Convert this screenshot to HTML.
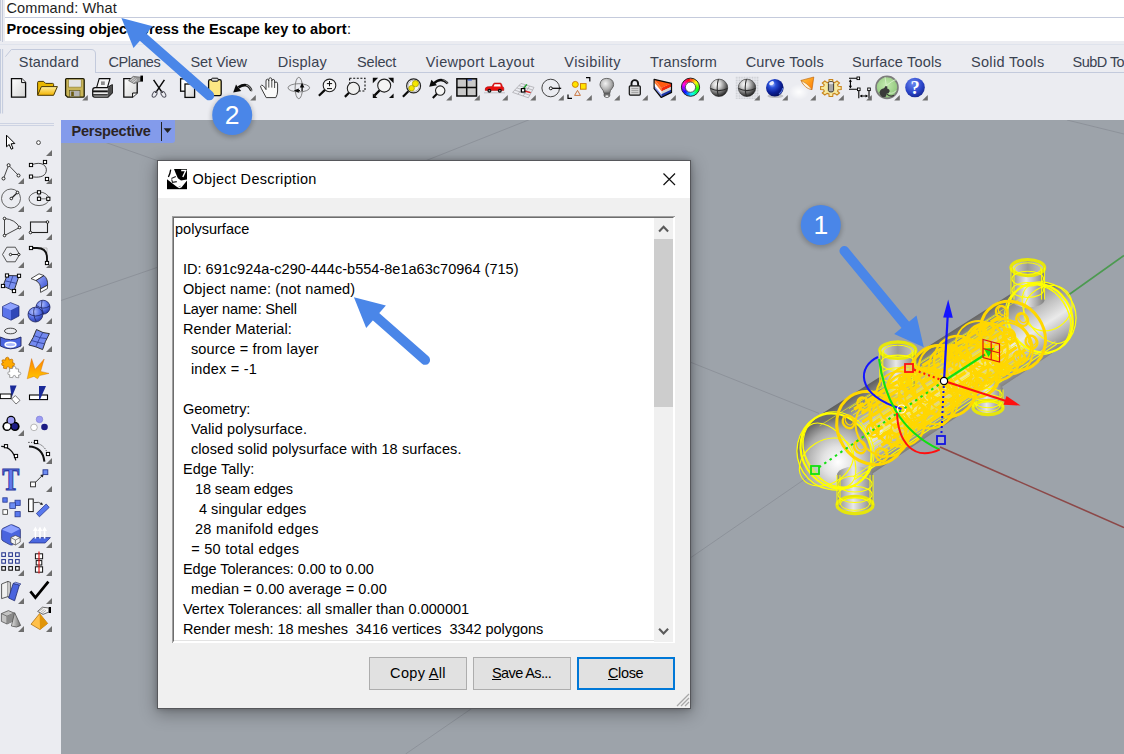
<!DOCTYPE html>
<html><head><meta charset="utf-8"><title>Object Description</title>
<style>
html,body{margin:0;padding:0}
body{width:1124px;height:754px;overflow:hidden;position:relative;background:#ebecf1;font-family:"Liberation Sans",sans-serif;}
.t{position:absolute;white-space:pre;}
.a{position:absolute;}
svg{position:absolute;left:0;top:0;overflow:visible}
</style></head>
<body>
<div class="a" style="left:60px;top:119px;width:1064px;height:635px;background:#d3d8e6"></div><div class="a" style="left:61px;top:120px;width:1063px;height:634px;background:#9da3aa"></div>
<svg width="1124" height="754" viewBox="0 0 1124 754"><path d="M103 141.5 L160 161.5 M61 300.5 L157 267.5 M690 362 L819 413.4 M405.6 754 L810 475.5 M529 119.8 L425 161 M1067 120 L1124 134 " stroke="#8d929a" stroke-width="1" fill="none"/><line x1="940" y1="447" x2="1124" y2="527.5" stroke="#8c4848" stroke-width="1.6"/><line x1="1060" y1="301" x2="1124" y2="255.5" stroke="#4c9a50" stroke-width="1.6"/><defs><linearGradient id="cyl" gradientUnits="userSpaceOnUse" x1="914.7" y1="352.0" x2="958.4" y2="419.0"><stop offset="0" stop-color="#585858"/><stop offset="0.14" stop-color="#848484"/><stop offset="0.4" stop-color="#c2c2c2"/><stop offset="0.6" stop-color="#eaeaea"/><stop offset="0.8" stop-color="#b4b4b4"/><stop offset="1" stop-color="#767676"/></linearGradient><radialGradient id="capL" gradientUnits="userSpaceOnUse" cx="838" cy="462" r="44"><stop offset="0" stop-color="#ffffff"/><stop offset="0.35" stop-color="#e2e2e2"/><stop offset="0.75" stop-color="#a9a9a9"/><stop offset="1" stop-color="#6c6c6c"/></radialGradient><linearGradient id="noz" x1="0" x2="1" y1="0" y2="0"><stop offset="0" stop-color="#8a8a8a"/><stop offset="0.45" stop-color="#e8e8e8"/><stop offset="1" stop-color="#808080"/></linearGradient><linearGradient id="nozin" x1="0" x2="1" y1="0" y2="0"><stop offset="0" stop-color="#d8d8d8"/><stop offset="0.5" stop-color="#9a9a9a"/><stop offset="1" stop-color="#c8c8c8"/></linearGradient></defs><path d="M814.7 418.3 L1020.3 287.8 A36.0 36.0 0 0 1 1059.7 348.2 L857.3 483.7 A39.0 39.0 0 0 1 814.7 418.3 Z" fill="url(#cyl)"/><path d="M814.7 418.3 A39.0 39.0 0 0 0 857.3 483.7 A33.9 39.0 -33.1 0 0 814.7 418.3 Z" fill="url(#capL)"/><path d="M1020.3 287.8 A36.0 36.0 0 0 1 1059.7 348.2 A31.3 36.0 -33.1 0 0 1020.3 287.8 Z" fill="#000" opacity="0.18"/><path d="M879.8 350.2 L879.8 386.2 A18 8.2 0 0 0 915.8 386.2 L915.8 350.2 Z" fill="url(#noz)" stroke="none"/><ellipse cx="897.8" cy="350.2" rx="18" ry="8.2" fill="url(#nozin)" stroke="#e6e60c" stroke-width="3.3"/><ellipse cx="897.8" cy="351.2" rx="14.5" ry="5.999999999999999" fill="none" stroke="#ffff00" stroke-width="1"/><ellipse cx="897.8" cy="362.8" rx="17" ry="7.699999999999999" fill="none" stroke="#ffff00" stroke-width="1.1"/><ellipse cx="897.8" cy="375.4" rx="17" ry="7.699999999999999" fill="none" stroke="#ffff00" stroke-width="1.1"/><line x1="879.8" y1="350.2" x2="879.8" y2="386.2" stroke="#ffff00" stroke-width="1"/><line x1="882.8" y1="350.2" x2="882.8" y2="386.2" stroke="#ffff00" stroke-width="1"/><line x1="912.8" y1="350.2" x2="912.8" y2="386.2" stroke="#ffff00" stroke-width="1"/><line x1="915.8" y1="350.2" x2="915.8" y2="386.2" stroke="#ffff00" stroke-width="1"/><path d="M1011.0 267.6 L1011.0 299.6 A16.8 8 0 0 0 1044.6 299.6 L1044.6 267.6 Z" fill="url(#noz)" stroke="none"/><ellipse cx="1027.8" cy="267.6" rx="16.8" ry="8" fill="url(#nozin)" stroke="#e6e60c" stroke-width="3.3"/><ellipse cx="1027.8" cy="268.6" rx="13.3" ry="5.8" fill="none" stroke="#ffff00" stroke-width="1"/><ellipse cx="1027.8" cy="278.8" rx="15.8" ry="7.5" fill="none" stroke="#ffff00" stroke-width="1.1"/><ellipse cx="1027.8" cy="290.0" rx="15.8" ry="7.5" fill="none" stroke="#ffff00" stroke-width="1.1"/><line x1="1011.0" y1="267.6" x2="1011.0" y2="299.6" stroke="#ffff00" stroke-width="1"/><line x1="1014.0" y1="267.6" x2="1014.0" y2="299.6" stroke="#ffff00" stroke-width="1"/><line x1="1041.6" y1="267.6" x2="1041.6" y2="299.6" stroke="#ffff00" stroke-width="1"/><line x1="1044.6" y1="267.6" x2="1044.6" y2="299.6" stroke="#ffff00" stroke-width="1"/><path d="M837.0 505.0 L837.0 475.0 A18 8.5 0 0 1 873.0 475.0 L873.0 505.0 Z" fill="url(#noz)" stroke="none"/><ellipse cx="855" cy="505" rx="18" ry="8.5" fill="url(#noz)" stroke="#e6e60c" stroke-width="3.3"/><ellipse cx="855" cy="504" rx="14.5" ry="6.3" fill="none" stroke="#ffff00" stroke-width="1"/><ellipse cx="855" cy="494.5" rx="17" ry="8.0" fill="none" stroke="#ffff00" stroke-width="1.1"/><ellipse cx="855" cy="484.0" rx="17" ry="8.0" fill="none" stroke="#ffff00" stroke-width="1.1"/><line x1="837.0" y1="505.0" x2="837.0" y2="475.0" stroke="#ffff00" stroke-width="1"/><line x1="840.0" y1="505.0" x2="840.0" y2="475.0" stroke="#ffff00" stroke-width="1"/><line x1="870.0" y1="505.0" x2="870.0" y2="475.0" stroke="#ffff00" stroke-width="1"/><line x1="873.0" y1="505.0" x2="873.0" y2="475.0" stroke="#ffff00" stroke-width="1"/><path d="M973.0 407.5 L973.0 389.5 A15 7 0 0 1 1003.0 389.5 L1003.0 407.5 Z" fill="url(#noz)" stroke="none"/><ellipse cx="988" cy="407.5" rx="15" ry="7" fill="url(#noz)" stroke="#e6e60c" stroke-width="3.3"/><ellipse cx="988" cy="406.5" rx="11.5" ry="4.8" fill="none" stroke="#ffff00" stroke-width="1"/><ellipse cx="988" cy="401.2" rx="14" ry="6.5" fill="none" stroke="#ffff00" stroke-width="1.1"/><ellipse cx="988" cy="394.9" rx="14" ry="6.5" fill="none" stroke="#ffff00" stroke-width="1.1"/><line x1="973.0" y1="407.5" x2="973.0" y2="389.5" stroke="#ffff00" stroke-width="1"/><line x1="976.0" y1="407.5" x2="976.0" y2="389.5" stroke="#ffff00" stroke-width="1"/><line x1="1000.0" y1="407.5" x2="1000.0" y2="389.5" stroke="#ffff00" stroke-width="1"/><line x1="1003.0" y1="407.5" x2="1003.0" y2="389.5" stroke="#ffff00" stroke-width="1"/><line x1="854.6" y1="479.5" x2="1056.9" y2="344.0" stroke="#ffff00" stroke-width="1.1" /><line x1="852.9" y1="477.0" x2="1055.3" y2="341.5" stroke="#ffff00" stroke-width="0.9" /><line x1="819.6" y1="425.9" x2="1025.3" y2="295.4" stroke="#ffff00" stroke-width="0.8" opacity="0.7"/><path d="M814.7 418.3 A39.0 39.0 0 0 0 857.3 483.7" fill="none" stroke="#ffff00" stroke-width="1.3"/><path d="M1020.3 287.8 A36.0 36.0 0 0 1 1059.7 348.2" fill="none" stroke="#ffff00" stroke-width="1.3"/><ellipse cx="836.0" cy="451.0" rx="33.9" ry="39.0" transform="rotate(-33.10 836.0 451.0)" fill="none" stroke="#ffff00" stroke-width="2.2" /><ellipse cx="838.5" cy="449.4" rx="33.9" ry="39.0" transform="rotate(-33.10 838.5 449.4)" fill="none" stroke="#ffff00" stroke-width="1" /><ellipse cx="1040.0" cy="318.0" rx="31.3" ry="36.0" transform="rotate(-33.10 1040.0 318.0)" fill="none" stroke="#ffff00" stroke-width="2.2" /><ellipse cx="1037.5" cy="319.6" rx="31.4" ry="36.0" transform="rotate(-33.10 1037.5 319.6)" fill="none" stroke="#ffff00" stroke-width="1" /><ellipse cx="829.3" cy="455.4" rx="21.5" ry="35.9" transform="rotate(-33.10 829.3 455.4)" fill="none" stroke="#ffff00" stroke-width="1.1" /><ellipse cx="826.5" cy="462.0" rx="29.2" ry="21.5" transform="rotate(-33.10 826.5 462.0)" fill="none" stroke="#ffff00" stroke-width="1.1" /><ellipse cx="1046.7" cy="313.6" rx="19.8" ry="33.1" transform="rotate(-33.10 1046.7 313.6)" fill="none" stroke="#ffff00" stroke-width="1.1" /><ellipse cx="1047.9" cy="308.1" rx="25.2" ry="21.6" transform="rotate(-33.10 1047.9 308.1)" fill="none" stroke="#ffff00" stroke-width="1.1" /><path d="M871.5 399.2 L988.2 325.5 L1009.7 340.2 L1014.9 366.6 L900.4 443.6 L877.3 426.5 Z" fill="#ffd800" opacity="0.36"/><line x1="848.9" y1="408.6" x2="1000.8" y2="312.0" stroke="#ffff00" stroke-width="0.9" opacity="0.9"/><line x1="851.0" y1="411.7" x2="1002.8" y2="315.0" stroke="#ffff00" stroke-width="0.9" opacity="0.9"/><line x1="853.1" y1="414.9" x2="1004.7" y2="317.9" stroke="#ffff00" stroke-width="0.9" opacity="0.9"/><line x1="855.1" y1="418.1" x2="1006.6" y2="320.9" stroke="#ffff00" stroke-width="0.9" opacity="0.9"/><line x1="857.2" y1="421.3" x2="1008.5" y2="323.8" stroke="#ffff00" stroke-width="0.9" opacity="0.9"/><line x1="859.3" y1="424.5" x2="1010.5" y2="326.8" stroke="#ffff00" stroke-width="0.9" opacity="0.9"/><line x1="861.4" y1="427.7" x2="1012.4" y2="329.7" stroke="#ffff00" stroke-width="0.9" opacity="0.9"/><line x1="863.4" y1="430.8" x2="1014.3" y2="332.7" stroke="#ffff00" stroke-width="0.9" opacity="0.9"/><line x1="865.5" y1="434.0" x2="1016.2" y2="335.6" stroke="#ffff00" stroke-width="0.9" opacity="0.9"/><line x1="867.6" y1="437.2" x2="1018.1" y2="338.5" stroke="#ffff00" stroke-width="0.9" opacity="0.9"/><line x1="869.7" y1="440.4" x2="1020.1" y2="341.5" stroke="#ffff00" stroke-width="0.9" opacity="0.9"/><line x1="871.7" y1="443.6" x2="1022.0" y2="344.4" stroke="#ffff00" stroke-width="0.9" opacity="0.9"/><line x1="873.8" y1="446.8" x2="1023.9" y2="347.4" stroke="#ffff00" stroke-width="0.9" opacity="0.9"/><line x1="875.9" y1="449.9" x2="1025.8" y2="350.3" stroke="#ffff00" stroke-width="0.9" opacity="0.9"/><line x1="878.0" y1="453.1" x2="1027.8" y2="353.3" stroke="#ffff00" stroke-width="0.9" opacity="0.9"/><line x1="880.0" y1="456.3" x2="1029.7" y2="356.2" stroke="#ffff00" stroke-width="0.9" opacity="0.9"/><line x1="854.2" y1="409.3" x2="1002.6" y2="314.6" stroke="#ffd700" stroke-width="3.4" stroke-dasharray="11 2.5" stroke-dashoffset="0"/><line x1="861.6" y1="413.4" x2="1003.9" y2="322.1" stroke="#ffd700" stroke-width="3.4" stroke-dasharray="14 2.5" stroke-dashoffset="4"/><line x1="862.4" y1="421.9" x2="1005.2" y2="329.6" stroke="#ffd700" stroke-width="3.4" stroke-dasharray="17 2.5" stroke-dashoffset="8"/><line x1="869.8" y1="426.0" x2="1014.0" y2="332.2" stroke="#ffd700" stroke-width="3.4" stroke-dasharray="11 2.5" stroke-dashoffset="12"/><line x1="870.6" y1="434.4" x2="1015.3" y2="339.7" stroke="#ffd700" stroke-width="3.4" stroke-dasharray="14 2.5" stroke-dashoffset="16"/><line x1="878.0" y1="438.5" x2="1016.6" y2="347.1" stroke="#ffd700" stroke-width="3.4" stroke-dasharray="17 2.5" stroke-dashoffset="20"/><line x1="878.8" y1="447.0" x2="1025.4" y2="349.7" stroke="#ffd700" stroke-width="3.4" stroke-dasharray="11 2.5" stroke-dashoffset="24"/><line x1="885.9" y1="450.7" x2="1026.5" y2="356.8" stroke="#ffd700" stroke-width="3.4" stroke-dasharray="14 2.5" stroke-dashoffset="28"/><ellipse cx="882.8" cy="427.6" rx="26.0" ry="29.9" transform="rotate(-33.10 882.8 427.6)" fill="none" stroke="#ffd700" stroke-width="2.0" /><ellipse cx="892.9" cy="421.1" rx="20.6" ry="23.7" transform="rotate(-33.10 892.9 421.1)" fill="none" stroke="#ffd700" stroke-width="2.0" /><ellipse cx="903.1" cy="400.1" rx="25.8" ry="29.6" transform="rotate(-33.10 903.1 400.1)" fill="none" stroke="#ffd700" stroke-width="2.0" /><ellipse cx="908.1" cy="396.8" rx="20.4" ry="23.5" transform="rotate(-33.10 908.1 396.8)" fill="none" stroke="#ffd700" stroke-width="2.0" /><ellipse cx="931.4" cy="396.0" rx="25.5" ry="29.4" transform="rotate(-33.10 931.4 396.0)" fill="none" stroke="#ffd700" stroke-width="2.0" /><ellipse cx="936.4" cy="392.7" rx="20.3" ry="23.3" transform="rotate(-33.10 936.4 392.7)" fill="none" stroke="#ffd700" stroke-width="2.0" /><ellipse cx="945.0" cy="372.8" rx="25.3" ry="29.1" transform="rotate(-33.10 945.0 372.8)" fill="none" stroke="#ffd700" stroke-width="2.0" /><ellipse cx="950.0" cy="369.5" rx="20.1" ry="23.1" transform="rotate(-33.10 950.0 369.5)" fill="none" stroke="#ffd700" stroke-width="2.0" /><ellipse cx="971.6" cy="369.7" rx="25.1" ry="28.9" transform="rotate(-33.10 971.6 369.7)" fill="none" stroke="#ffd700" stroke-width="2.0" /><ellipse cx="975.0" cy="367.6" rx="20.0" ry="22.9" transform="rotate(-33.10 975.0 367.6)" fill="none" stroke="#ffd700" stroke-width="2.0" /><ellipse cx="981.8" cy="348.8" rx="25.0" ry="28.7" transform="rotate(-33.10 981.8 348.8)" fill="none" stroke="#ffd700" stroke-width="2.0" /><ellipse cx="986.9" cy="345.5" rx="19.8" ry="22.8" transform="rotate(-33.10 986.9 345.5)" fill="none" stroke="#ffd700" stroke-width="2.0" /><ellipse cx="1006.8" cy="346.8" rx="24.8" ry="28.5" transform="rotate(-33.10 1006.8 346.8)" fill="none" stroke="#ffd700" stroke-width="2.0" /><ellipse cx="1010.2" cy="344.6" rx="19.7" ry="22.6" transform="rotate(-33.10 1010.2 344.6)" fill="none" stroke="#ffd700" stroke-width="2.0" /><ellipse cx="871.2" cy="428.1" rx="33.0" ry="37.9" transform="rotate(-33.10 871.2 428.1)" fill="none" stroke="#ffd700" stroke-width="3.0" /><ellipse cx="943.2" cy="381.1" rx="32.1" ry="36.9" transform="rotate(-33.10 943.2 381.1)" fill="none" stroke="#ffd700" stroke-width="3.0" /><ellipse cx="1012.8" cy="335.8" rx="31.2" ry="35.9" transform="rotate(-33.10 1012.8 335.8)" fill="none" stroke="#ffd700" stroke-width="3.0" /><ellipse cx="897.4" cy="417.0" rx="26.5" ry="30.5" transform="rotate(-33.10 897.4 417.0)" fill="none" stroke="#ffd700" stroke-width="2.4" /><ellipse cx="914.2" cy="395.2" rx="26.3" ry="30.3" transform="rotate(-33.10 914.2 395.2)" fill="none" stroke="#ffd700" stroke-width="2.4" /><ellipse cx="926.4" cy="399.2" rx="26.3" ry="30.2" transform="rotate(-33.10 926.4 399.2)" fill="none" stroke="#ffd700" stroke-width="2.4" /><ellipse cx="961.1" cy="364.6" rx="25.8" ry="29.7" transform="rotate(-33.10 961.1 364.6)" fill="none" stroke="#ffd700" stroke-width="2.4" /><ellipse cx="973.3" cy="368.6" rx="25.8" ry="29.6" transform="rotate(-33.10 973.3 368.6)" fill="none" stroke="#ffd700" stroke-width="2.4" /><ellipse cx="993.4" cy="351.9" rx="25.5" ry="29.4" transform="rotate(-33.10 993.4 351.9)" fill="none" stroke="#ffd700" stroke-width="2.4" /><ellipse cx="848.6" cy="421.9" rx="5.6" ry="6.6" transform="rotate(-33.1 848.6 421.9)" fill="none" stroke="#ffd700" stroke-width="2.3"/><ellipse cx="849.8000000000001" cy="421.09999999999997" rx="3.6" ry="4.6" transform="rotate(-33.1 848.6 421.9)" fill="none" stroke="#ffd700" stroke-width="1.3"/><ellipse cx="863.3" cy="403.8" rx="5.6" ry="6.6" transform="rotate(-33.1 863.3 403.8)" fill="none" stroke="#ffd700" stroke-width="2.3"/><ellipse cx="864.5" cy="403.0" rx="3.6" ry="4.6" transform="rotate(-33.1 863.3 403.8)" fill="none" stroke="#ffd700" stroke-width="1.3"/><ellipse cx="859.8" cy="446.9" rx="5.6" ry="6.6" transform="rotate(-33.1 859.8 446.9)" fill="none" stroke="#ffd700" stroke-width="2.3"/><ellipse cx="861.0" cy="446.09999999999997" rx="3.6" ry="4.6" transform="rotate(-33.1 859.8 446.9)" fill="none" stroke="#ffd700" stroke-width="1.3"/><ellipse cx="872.8" cy="430.5" rx="5.6" ry="6.6" transform="rotate(-33.1 872.8 430.5)" fill="none" stroke="#ffd700" stroke-width="2.3"/><ellipse cx="874.0" cy="429.7" rx="3.6" ry="4.6" transform="rotate(-33.1 872.8 430.5)" fill="none" stroke="#ffd700" stroke-width="1.3"/><ellipse cx="881.4" cy="454.7" rx="5.6" ry="6.6" transform="rotate(-33.1 881.4 454.7)" fill="none" stroke="#ffd700" stroke-width="2.3"/><ellipse cx="882.6" cy="453.9" rx="3.6" ry="4.6" transform="rotate(-33.1 881.4 454.7)" fill="none" stroke="#ffd700" stroke-width="1.3"/><ellipse cx="892.6" cy="439.1" rx="5.6" ry="6.6" transform="rotate(-33.1 892.6 439.1)" fill="none" stroke="#ffd700" stroke-width="2.3"/><ellipse cx="893.8000000000001" cy="438.3" rx="3.6" ry="4.6" transform="rotate(-33.1 892.6 439.1)" fill="none" stroke="#ffd700" stroke-width="1.3"/><ellipse cx="1001.8" cy="312.2" rx="5.6" ry="6.6" transform="rotate(-33.1 1001.8 312.2)" fill="none" stroke="#ffd700" stroke-width="2.3"/><ellipse cx="1003.0" cy="311.4" rx="3.6" ry="4.6" transform="rotate(-33.1 1001.8 312.2)" fill="none" stroke="#ffd700" stroke-width="1.3"/><ellipse cx="1022.2" cy="319.6" rx="5.6" ry="6.6" transform="rotate(-33.1 1022.2 319.6)" fill="none" stroke="#ffd700" stroke-width="2.3"/><ellipse cx="1023.4000000000001" cy="318.8" rx="3.6" ry="4.6" transform="rotate(-33.1 1022.2 319.6)" fill="none" stroke="#ffd700" stroke-width="1.3"/><ellipse cx="987.9" cy="328.9" rx="5.6" ry="6.6" transform="rotate(-33.1 987.9 328.9)" fill="none" stroke="#ffd700" stroke-width="2.3"/><ellipse cx="989.1" cy="328.09999999999997" rx="3.6" ry="4.6" transform="rotate(-33.1 987.9 328.9)" fill="none" stroke="#ffd700" stroke-width="1.3"/><ellipse cx="1009.2" cy="335.4" rx="5.6" ry="6.6" transform="rotate(-33.1 1009.2 335.4)" fill="none" stroke="#ffd700" stroke-width="2.3"/><ellipse cx="1010.4000000000001" cy="334.59999999999997" rx="3.6" ry="4.6" transform="rotate(-33.1 1009.2 335.4)" fill="none" stroke="#ffd700" stroke-width="1.3"/><ellipse cx="1031.5" cy="341.9" rx="5.6" ry="6.6" transform="rotate(-33.1 1031.5 341.9)" fill="none" stroke="#ffd700" stroke-width="2.3"/><ellipse cx="1032.7" cy="341.09999999999997" rx="3.6" ry="4.6" transform="rotate(-33.1 1031.5 341.9)" fill="none" stroke="#ffd700" stroke-width="1.3"/><ellipse cx="1019.4" cy="357.7" rx="5.6" ry="6.6" transform="rotate(-33.1 1019.4 357.7)" fill="none" stroke="#ffd700" stroke-width="2.3"/><ellipse cx="1020.6" cy="356.9" rx="3.6" ry="4.6" transform="rotate(-33.1 1019.4 357.7)" fill="none" stroke="#ffd700" stroke-width="1.3"/><ellipse cx="908.9" cy="406.0" rx="4.2" ry="5.2" transform="rotate(-33.10 908.9 406.0)" fill="none" stroke="#ffd700" stroke-width="1.8" /><ellipse cx="927.9" cy="397.0" rx="4.2" ry="5.2" transform="rotate(-33.10 927.9 397.0)" fill="none" stroke="#ffd700" stroke-width="1.8" /><ellipse cx="947.6" cy="353.3" rx="4.2" ry="5.2" transform="rotate(-33.10 947.6 353.3)" fill="none" stroke="#ffd700" stroke-width="1.8" /><ellipse cx="886.8" cy="437.2" rx="4.2" ry="5.2" transform="rotate(-33.10 886.8 437.2)" fill="none" stroke="#ffd700" stroke-width="1.8" /><ellipse cx="903.6" cy="391.7" rx="4.2" ry="5.2" transform="rotate(-33.10 903.6 391.7)" fill="none" stroke="#ffd700" stroke-width="1.8" /><ellipse cx="1007.2" cy="337.7" rx="4.2" ry="5.2" transform="rotate(-33.10 1007.2 337.7)" fill="none" stroke="#ffd700" stroke-width="1.8" /><ellipse cx="986.3" cy="351.7" rx="4.2" ry="5.2" transform="rotate(-33.10 986.3 351.7)" fill="none" stroke="#ffd700" stroke-width="1.8" /><ellipse cx="951.6" cy="355.6" rx="4.2" ry="5.2" transform="rotate(-33.10 951.6 355.6)" fill="none" stroke="#ffd700" stroke-width="1.8" /><ellipse cx="969.9" cy="384.8" rx="4.2" ry="5.2" transform="rotate(-33.10 969.9 384.8)" fill="none" stroke="#ffd700" stroke-width="1.8" /><ellipse cx="951.8" cy="389.3" rx="4.2" ry="5.2" transform="rotate(-33.10 951.8 389.3)" fill="none" stroke="#ffd700" stroke-width="1.8" /><ellipse cx="953.6" cy="349.3" rx="4.2" ry="5.2" transform="rotate(-33.10 953.6 349.3)" fill="none" stroke="#ffd700" stroke-width="1.8" /><ellipse cx="979.0" cy="363.0" rx="4.2" ry="5.2" transform="rotate(-33.10 979.0 363.0)" fill="none" stroke="#ffd700" stroke-width="1.8" /><ellipse cx="903.8" cy="379.9" rx="4.2" ry="5.2" transform="rotate(-33.10 903.8 379.9)" fill="none" stroke="#ffd700" stroke-width="1.8" /><ellipse cx="990.1" cy="349.0" rx="4.2" ry="5.2" transform="rotate(-33.10 990.1 349.0)" fill="none" stroke="#ffd700" stroke-width="1.8" /><ellipse cx="981.3" cy="378.0" rx="4.2" ry="5.2" transform="rotate(-33.10 981.3 378.0)" fill="none" stroke="#ffd700" stroke-width="1.8" /><ellipse cx="981.8" cy="380.1" rx="4.2" ry="5.2" transform="rotate(-33.10 981.8 380.1)" fill="none" stroke="#ffd700" stroke-width="1.8" /><ellipse cx="936.4" cy="402.8" rx="4.2" ry="5.2" transform="rotate(-33.10 936.4 402.8)" fill="none" stroke="#ffd700" stroke-width="1.8" /><ellipse cx="946.5" cy="403.9" rx="4.2" ry="5.2" transform="rotate(-33.10 946.5 403.9)" fill="none" stroke="#ffd700" stroke-width="1.8" /><ellipse cx="982.0" cy="332.8" rx="4.2" ry="5.2" transform="rotate(-33.10 982.0 332.8)" fill="none" stroke="#ffd700" stroke-width="1.8" /><ellipse cx="886.8" cy="401.7" rx="4.2" ry="5.2" transform="rotate(-33.10 886.8 401.7)" fill="none" stroke="#ffd700" stroke-width="1.8" /><ellipse cx="1002.3" cy="338.9" rx="4.2" ry="5.2" transform="rotate(-33.10 1002.3 338.9)" fill="none" stroke="#ffd700" stroke-width="1.8" /><ellipse cx="953.9" cy="362.7" rx="4.2" ry="5.2" transform="rotate(-33.10 953.9 362.7)" fill="none" stroke="#ffd700" stroke-width="1.8" /><ellipse cx="940.4" cy="376.4" rx="4.2" ry="5.2" transform="rotate(-33.10 940.4 376.4)" fill="none" stroke="#ffd700" stroke-width="1.8" /><ellipse cx="924.9" cy="397.9" rx="4.2" ry="5.2" transform="rotate(-33.10 924.9 397.9)" fill="none" stroke="#ffd700" stroke-width="1.8" /><ellipse cx="964.1" cy="390.6" rx="4.2" ry="5.2" transform="rotate(-33.10 964.1 390.6)" fill="none" stroke="#ffd700" stroke-width="1.8" /><ellipse cx="977.7" cy="383.2" rx="4.2" ry="5.2" transform="rotate(-33.10 977.7 383.2)" fill="none" stroke="#ffd700" stroke-width="1.8" /><ellipse cx="1002.4" cy="370.6" rx="4.2" ry="5.2" transform="rotate(-33.10 1002.4 370.6)" fill="none" stroke="#ffd700" stroke-width="1.8" /><ellipse cx="956.2" cy="353.3" rx="4.2" ry="5.2" transform="rotate(-33.10 956.2 353.3)" fill="none" stroke="#ffd700" stroke-width="1.8" /><ellipse cx="1002.3" cy="369.2" rx="4.2" ry="5.2" transform="rotate(-33.10 1002.3 369.2)" fill="none" stroke="#ffd700" stroke-width="1.8" /><ellipse cx="997.8" cy="349.5" rx="4.2" ry="5.2" transform="rotate(-33.10 997.8 349.5)" fill="none" stroke="#ffd700" stroke-width="1.8" /><ellipse cx="963.1" cy="351.6" rx="4.2" ry="5.2" transform="rotate(-33.10 963.1 351.6)" fill="none" stroke="#ffd700" stroke-width="1.8" /><ellipse cx="988.2" cy="356.0" rx="4.2" ry="5.2" transform="rotate(-33.10 988.2 356.0)" fill="none" stroke="#ffd700" stroke-width="1.8" /><ellipse cx="902.5" cy="382.6" rx="4.2" ry="5.2" transform="rotate(-33.10 902.5 382.6)" fill="none" stroke="#ffd700" stroke-width="1.8" /><ellipse cx="1002.1" cy="370.8" rx="4.2" ry="5.2" transform="rotate(-33.10 1002.1 370.8)" fill="none" stroke="#ffd700" stroke-width="1.8" /><ellipse cx="895.8" cy="429.2" rx="4.2" ry="5.2" transform="rotate(-33.10 895.8 429.2)" fill="none" stroke="#ffd700" stroke-width="1.8" /><ellipse cx="921.4" cy="375.3" rx="4.2" ry="5.2" transform="rotate(-33.10 921.4 375.3)" fill="none" stroke="#ffd700" stroke-width="1.8" /><ellipse cx="922.2" cy="410.2" rx="4.2" ry="5.2" transform="rotate(-33.10 922.2 410.2)" fill="none" stroke="#ffd700" stroke-width="1.8" /><ellipse cx="979.8" cy="331.1" rx="4.2" ry="5.2" transform="rotate(-33.10 979.8 331.1)" fill="none" stroke="#ffd700" stroke-width="1.8" /><ellipse cx="945.6" cy="353.5" rx="4.2" ry="5.2" transform="rotate(-33.10 945.6 353.5)" fill="none" stroke="#ffd700" stroke-width="1.8" /><ellipse cx="966.9" cy="356.0" rx="4.2" ry="5.2" transform="rotate(-33.10 966.9 356.0)" fill="none" stroke="#ffd700" stroke-width="1.8" /><ellipse cx="1005.4" cy="368.1" rx="4.2" ry="5.2" transform="rotate(-33.10 1005.4 368.1)" fill="none" stroke="#ffd700" stroke-width="1.8" /><ellipse cx="956.2" cy="401.2" rx="4.2" ry="5.2" transform="rotate(-33.10 956.2 401.2)" fill="none" stroke="#ffd700" stroke-width="1.8" /><ellipse cx="906.1" cy="381.1" rx="4.2" ry="5.2" transform="rotate(-33.10 906.1 381.1)" fill="none" stroke="#ffd700" stroke-width="1.8" /><ellipse cx="943.3" cy="354.2" rx="4.2" ry="5.2" transform="rotate(-33.10 943.3 354.2)" fill="none" stroke="#ffd700" stroke-width="1.8" /><ellipse cx="899.9" cy="404.1" rx="4.2" ry="5.2" transform="rotate(-33.10 899.9 404.1)" fill="none" stroke="#ffd700" stroke-width="1.8" /><ellipse cx="948.0" cy="358.3" rx="4.2" ry="5.2" transform="rotate(-33.10 948.0 358.3)" fill="none" stroke="#ffd700" stroke-width="1.8" /><path d="M878 357 C858 366 854 394 901.5 409" fill="none" stroke="#1414ff" stroke-width="2"/><path d="M879 359 C884 395 898 430 939.6 449.6" fill="none" stroke="#10e010" stroke-width="2"/><path d="M897 413 C898 440 912 462 939.6 449.6" fill="none" stroke="#ff1010" stroke-width="2"/><circle cx="901.5" cy="409" r="4" fill="none" stroke="#fff" stroke-width="1.2"/><line x1="944" y1="381" x2="912" y2="369" stroke="#ff1010" stroke-width="2" stroke-dasharray="2 3"/><line x1="944" y1="381" x2="941.3" y2="436" stroke="#1414e0" stroke-width="2" stroke-dasharray="2 3"/><line x1="944" y1="381" x2="818" y2="468" stroke="#10e010" stroke-width="2" stroke-dasharray="2.5 4"/><line x1="944" y1="381" x2="985" y2="354.5" stroke="#10e010" stroke-width="2.2"/><path d="M994 348 L984 348.5 L988.5 357 Z" fill="#10e010"/><path d="M983 339.5 L999.5 344 L999.5 362 L983 357.5 Z M991.2 341.7 V359.7 M983 348.5 L999.5 353" fill="none" stroke="#e01010" stroke-width="1.2"/><line x1="944" y1="381" x2="1006" y2="401" stroke="#ff1010" stroke-width="2.2"/><path d="M1020.5 405.5 L1003.5 404.8 L1006.5 396 Z" fill="#ff1010"/><line x1="944" y1="381" x2="947.7" y2="316" stroke="#1414ff" stroke-width="2.2"/><path d="M948.2 299.5 L943.2 317.5 L952.8 317.8 Z" fill="#1414ff"/><rect x="905" y="364" width="8" height="8" fill="#d8c8a0" fill-opacity="0.5" stroke="#ff1010" stroke-width="1.8"/><rect x="937" y="436" width="8" height="8" fill="#b0b0d8" fill-opacity="0.6" stroke="#1414e0" stroke-width="1.8"/><rect x="811" y="466" width="8" height="8" fill="#b0d8b0" fill-opacity="0.4" stroke="#10e010" stroke-width="1.8"/><circle cx="944" cy="381" r="3.6" fill="#fff" stroke="#000" stroke-width="1.2"/></svg>
<div class="a" style="left:61px;top:120px;width:114px;height:23px;background:#839beb;border-bottom-right-radius:3px"></div>
<div class="a" style="left:161px;top:122px;width:1px;height:19px;background:#222"></div>
<svg width="1124" height="754" viewBox="0 0 1124 754"><path d="M163.6 128.2 H171.6 L167.6 133 Z" fill="#222"/></svg>
<span class="t" style="left:71.5px;top:120.78px;font-size:14.5px;font-weight:700;color:#2b2424;letter-spacing:-0.212px;line-height:20px">Perspective</span>
<div class="a" style="left:0;top:0;width:1124px;height:119.5px;background:#ebecf1"></div>
<div class="a" style="left:0;top:119px;width:61px;height:635px;background:#ebecf1"></div>
<div class="a" style="left:0;top:0;width:1px;height:41px;background:#c3c9d9"></div>
<div class="a" style="left:2px;top:0;width:1px;height:42px;background:#c3c9d9"></div>
<div class="a" style="left:5px;top:0;width:1119px;height:41px;background:#fff"></div>
<div class="a" style="left:5px;top:17px;width:1119px;height:1px;background:#c5cbdc"></div>
<span class="t" style="left:6.4px;top:-2.02px;font-size:14.5px;color:#1e1e1e;letter-spacing:0.134px;line-height:20px">Command: What</span>
<span class="t" style="left:6.5px;top:18.88px;font-size:14.5px;font-weight:700;color:#000;letter-spacing:0.033px;line-height:20px">Processing object, press the Escape key to abort</span>
<span class="t" style="left:347.0px;top:18.88px;font-size:14.5px;color:#000;letter-spacing:0.000px;line-height:20px">:</span>
<div class="a" style="left:0;top:43.5px;width:1124px;height:1px;background:#dfe3ec"></div>
<div class="a" style="left:95px;top:72px;width:1029px;height:1px;background:#c3cadc"></div>
<svg width="1124" height="120" viewBox="0 0 1124 120"><path d="M5.4 56.7 L11.3 49.5 H91 Q95.5 49.5 95.5 54 V72.5" fill="none" stroke="#c3cadc" stroke-width="1"/><path d="M0.5 49 V113.5 M2.6 49 V113.5" stroke="#c3cbdd" stroke-width="1" fill="none"/></svg>
<span class="t" style="left:18.8px;top:51.68px;font-size:14.5px;color:#3a4250;letter-spacing:0.163px;line-height:20px">Standard</span>
<span class="t" style="left:108.4px;top:51.68px;font-size:14.5px;color:#3a4250;letter-spacing:-0.402px;line-height:20px">CPlanes</span>
<span class="t" style="left:190.4px;top:51.68px;font-size:14.5px;color:#3a4250;letter-spacing:-0.053px;line-height:20px">Set View</span>
<span class="t" style="left:277.8px;top:51.68px;font-size:14.5px;color:#3a4250;letter-spacing:0.242px;line-height:20px">Display</span>
<span class="t" style="left:357.1px;top:51.68px;font-size:14.5px;color:#3a4250;letter-spacing:-0.203px;line-height:20px">Select</span>
<span class="t" style="left:425.8px;top:51.68px;font-size:14.5px;color:#3a4250;letter-spacing:0.349px;line-height:20px">Viewport Layout</span>
<span class="t" style="left:564.3px;top:51.68px;font-size:14.5px;color:#3a4250;letter-spacing:0.466px;line-height:20px">Visibility</span>
<span class="t" style="left:650.0px;top:51.68px;font-size:14.5px;color:#3a4250;letter-spacing:0.159px;line-height:20px">Transform</span>
<span class="t" style="left:745.7px;top:51.68px;font-size:14.5px;color:#3a4250;letter-spacing:0.170px;line-height:20px">Curve Tools</span>
<span class="t" style="left:851.9px;top:51.68px;font-size:14.5px;color:#3a4250;letter-spacing:0.176px;line-height:20px">Surface Tools</span>
<span class="t" style="left:970.9px;top:51.68px;font-size:14.5px;color:#3a4250;letter-spacing:0.344px;line-height:20px">Solid Tools</span>
<span class="t" style="left:1072.6px;top:51.68px;font-size:14.5px;color:#3a4250;letter-spacing:-0.543px;line-height:20px">SubD Tools</span>
<div class="a" style="left:0;top:123px;width:54px;height:1px;background:#cdd3e3"></div><div class="a" style="left:0;top:125px;width:54px;height:1px;background:#cdd3e3"></div>
<svg width="1124" height="754" viewBox="0 0 1124 754"><defs>
<linearGradient id="pg" x1="0" y1="0" x2="1" y2="1"><stop offset="0" stop-color="#ffffff"/><stop offset="1" stop-color="#d4d4d4"/></linearGradient>
<linearGradient id="fold" x1="0" y1="0" x2="0" y2="1"><stop offset="0" stop-color="#fff0a0"/><stop offset="1" stop-color="#f2b200"/></linearGradient>
<radialGradient id="sph" cx="0.38" cy="0.3" r="0.75"><stop offset="0" stop-color="#ffffff"/><stop offset="0.3" stop-color="#d4d4d4"/><stop offset="0.65" stop-color="#747474"/><stop offset="1" stop-color="#161616"/></radialGradient>
<radialGradient id="bsph" cx="0.36" cy="0.3" r="0.8"><stop offset="0" stop-color="#a4bcff"/><stop offset="0.25" stop-color="#2a50d8"/><stop offset="0.6" stop-color="#0c2098"/><stop offset="1" stop-color="#040a48"/></radialGradient>
<radialGradient id="bulb" cx="0.4" cy="0.35" r="0.7"><stop offset="0" stop-color="#f2f2f2"/><stop offset="0.6" stop-color="#b0b0b0"/><stop offset="1" stop-color="#707070"/></radialGradient>
<radialGradient id="hlp" cx="0.4" cy="0.3" r="0.8"><stop offset="0" stop-color="#6a86f0"/><stop offset="0.6" stop-color="#2a44c8"/><stop offset="1" stop-color="#101f80"/></radialGradient>
<radialGradient id="gh" cx="0.45" cy="0.4" r="0.7"><stop offset="0" stop-color="#c4ecb0"/><stop offset="0.7" stop-color="#98cc84"/><stop offset="1" stop-color="#7aa070"/></radialGradient>
<radialGradient id="glow" cx="0.5" cy="0.5" r="0.5"><stop offset="0" stop-color="#ffffff" stop-opacity="0.95"/><stop offset="1" stop-color="#ffffff" stop-opacity="0"/></radialGradient>
<linearGradient id="cone" x1="0" y1="0" x2="1" y2="1"><stop offset="0" stop-color="#ffc840"/><stop offset="1" stop-color="#ff7800"/></linearGradient>
<pattern id="dots" x="735.5" y="76.5" width="2.6" height="2.6" patternUnits="userSpaceOnUse"><rect x="0.5" y="0.5" width="1.6" height="1.6" fill="#c6c8ce"/></pattern>
</defs><path d="M11.5 78.6 H21.6 L25.6 82.6 V97.2 H11.5 Z" fill="url(#pg)" stroke="#0a0a0a" stroke-width="1.3"/><path d="M21.6 78.6 V82.6 H25.6" fill="#f6f6f6" stroke="#0a0a0a" stroke-width="1"/><path d="M37.6 95 V82.6 Q37.6 81.4 38.8 81.4 H43.6 L45.6 83.4 H52.6 Q53.6 83.4 53.6 84.4 V87" fill="#e9b700" stroke="#4a3800" stroke-width="1"/><path d="M37.6 95.3 L41.4 86.6 H57.4 L53.6 95.3 Z" fill="url(#fold)" stroke="#4a3800" stroke-width="1"/><path d="M65.6 79.6 Q65.6 78.6 66.6 78.6 H83 Q84.2 78.6 84.2 79.8 V96 Q84.2 97.2 83 97.2 H67.6 L65.6 95.2 Z" fill="#c9b558" stroke="#1c1a05" stroke-width="1.3"/><rect x="68.6" y="79.3" width="12.6" height="7.8" fill="#e4e4e4" stroke="#8a7c30" stroke-width="0.6"/><rect x="69.6" y="90.4" width="10.4" height="6.4" fill="#b4b4b4" stroke="#5a5010" stroke-width="0.6"/><rect x="71.2" y="91.6" width="2.6" height="4.4" fill="#6a5a10"/><path d="M87.8 94.9 V100.5 H82.2 Z" fill="#6e6e6e"/><path d="M96.4 88.4 L99.2 78.6 H110 L107.2 88.4 Z" fill="#f6f6f6" stroke="#0a0a0a" stroke-width="1.1"/><rect x="101" y="81.4" width="3.8" height="3.6" fill="#8c8c8c"/><path d="M92.7 90.2 Q92.7 87.6 95.2 87.6 H107.6 L112.3 84.8 V92.8 L107.8 97.2 H94.8 Q92.7 97.2 92.7 95 Z" fill="#ececec" stroke="#0a0a0a" stroke-width="1.2" stroke-linejoin="round"/><path d="M107.8 88 L112.3 84.8 V92.8 L107.8 97.2 Z" fill="#4c4c4c"/><rect x="93" y="90.4" width="14.8" height="1.9" fill="#141414"/><rect x="93" y="94" width="14.8" height="1.7" fill="#3a3a3a"/><path d="M123.8 78.6 H137.2 V93 L132.6 97.2 H123.8 Z" fill="url(#pg)" stroke="#0a0a0a" stroke-width="1.3"/><path d="M132.6 97.2 V93 H137.2" fill="#fff" stroke="#0a0a0a" stroke-width="1"/><path d="M128.6 80.6 L133.2 76.4 L140.6 77.2 V81.2 L134 83.6 Z" fill="#9c9c9c" stroke="#555" stroke-width="0.7"/><path d="M130 80.5 L134 77.5 M131.5 81.7 L135.5 78.5 M133 82.7 L137 79.5" stroke="#e8e8e8" stroke-width="0.7"/><rect x="140.4" y="75.6" width="2.6" height="6" fill="#000"/><path d="M153.6 79.8 L162.4 92.8 M164.4 79.8 L155.6 92.8" stroke="#0a0a0a" stroke-width="1.5" fill="none"/><ellipse cx="154.6" cy="94.3" rx="2" ry="3.2" transform="rotate(32 154.6 94.3)" fill="none" stroke="#5a5a66" stroke-width="1"/><ellipse cx="163.4" cy="94.3" rx="2" ry="3.2" transform="rotate(-32 163.4 94.3)" fill="none" stroke="#5a5a66" stroke-width="1"/><rect x="180.6" y="78.8" width="9.6" height="12.4" fill="#fff" stroke="#0a0a0a" stroke-width="1.3"/><rect x="185" y="84" width="9.6" height="13.4" fill="url(#pg)" stroke="#0a0a0a" stroke-width="1.3"/><rect x="208.6" y="79.6" width="12.6" height="16" rx="1.6" fill="#fde884" stroke="#0a0a0a" stroke-width="1.3"/><rect x="211.6" y="78.2" width="6.6" height="3" rx="1" fill="#e0e0e0" stroke="#0a0a0a" stroke-width="1"/><path d="M251.4 90.8 Q247.4 81.6 238.4 87.4" fill="none" stroke="#0a0a0a" stroke-width="2.6"/><path d="M233.2 92.4 L236 84.6 L241.2 91 Z" fill="#0a0a0a"/><path d="M251.8 91.5 Q250 86 246 85" fill="none" stroke="#888" stroke-width="1.2"/><path d="M255.8 94.9 V100.5 H250.2 Z" fill="#6e6e6e"/><path d="M266.2 97.6 L261.2 88.2 Q259.6 85.6 261.6 85.2 Q263 85 264.4 87.2 L266 89.6 V81 Q266 79.2 267.4 79.2 Q268.8 79.2 268.8 81 V79.6 Q268.8 77.8 270.3 77.8 Q271.8 77.8 271.8 79.6 V81 Q271.8 79.4 273.2 79.4 Q274.6 79.4 274.6 81 V83.4 Q274.6 82 276 82 Q277.6 82 277.6 83.8 V91 Q277.6 94.6 275.8 97.6 Z" fill="#fafafa" stroke="#3a3a3a" stroke-width="1"/><path d="M268.8 81 V87.6 M271.8 81 V87.6 M274.6 83.4 V88" stroke="#3a3a3a" stroke-width="0.9" fill="none"/><ellipse cx="298.8" cy="87.8" rx="10.8" ry="4.1" fill="none" stroke="#6a6a6a" stroke-width="0.8"/><ellipse cx="298.8" cy="88" rx="3.7" ry="10.7" fill="none" stroke="#6a6a6a" stroke-width="0.8"/><path d="M302 82.8 L304.4 87.6 H299.8 Z M293.8 90.6 L298.8 88.4 V92.8 Z" fill="#0a0a0a"/><path d="M302 86 V91 M296 90.6 H300" stroke="#0a0a0a" stroke-width="1.1"/><circle cx="329.5" cy="85.4" r="6.3" fill="#f6f6f6" stroke="#222" stroke-width="1.1"/><path d="M325 89.9 L318.9 95.8" stroke="#0a0a0a" stroke-width="2.2"/><path d="M326.9 83.6 H332.1 M329.5 81 V86.2 M327 88.6 H332" stroke="#0a0a0a" stroke-width="1"/><rect x="349.6" y="78.2" width="15.4" height="12.8" fill="none" stroke="#0a0a0a" stroke-width="1.1" stroke-dasharray="2 1.6"/><circle cx="353.4" cy="88.4" r="6.1" fill="#f0f0f0" stroke="#222" stroke-width="1.1"/><path d="M349 92.8 L344.9 96.9" stroke="#0a0a0a" stroke-width="2.2"/><path d="M372.8 77.8 h5.4 l-5.4 5.4 Z M393.6 77.8 h-5.4 l5.4 5.4 Z M372.8 98 v-4.6 l4.6 4.6 Z M393.6 98 v-4.6 l-4.6 4.6 Z" fill="#0a0a0a"/><circle cx="384.2" cy="85.6" r="6.5" fill="#f4f4f4" stroke="#222" stroke-width="1.1"/><path d="M379.6 90.4 L374.6 95.4" stroke="#0a0a0a" stroke-width="2.2"/><circle cx="413.6" cy="85.9" r="7" fill="#f6f6f6" stroke="#222" stroke-width="1.1"/><circle cx="413.6" cy="85.9" r="5.6" fill="none" stroke="#888" stroke-width="0.6"/><circle cx="415.4" cy="83.7" r="3.1" fill="#f4e600" stroke="#a89a00" stroke-width="0.7"/><circle cx="411.6" cy="88.2" r="2.8" fill="#f4e600" stroke="#a89a00" stroke-width="0.7"/><path d="M408.4 91.2 L402.9 96.8" stroke="#0a0a0a" stroke-width="2.2"/><path d="M447.6 83.4 Q441 76.6 433.6 83.6" fill="none" stroke="#0a0a0a" stroke-width="2.4"/><path d="M429.2 86.8 L431.4 79.8 L437 85.2 Z" fill="#0a0a0a"/><path d="M448 84 Q446 80.5 442.5 79.5" stroke="#777" stroke-width="1.1" fill="none"/><circle cx="440.2" cy="90.6" r="4.7" fill="#f6f6f6" stroke="#222" stroke-width="1.1"/><path d="M436.8 94 L432.8 98" stroke="#0a0a0a" stroke-width="2"/><path d="M451.8 94.9 V100.5 H446.2 Z" fill="#6e6e6e"/><rect x="456.9" y="78.8" width="19.6" height="17.2" fill="#c9c9c9" stroke="#0a0a0a" stroke-width="1.5"/><path d="M466.7 78.8 V96 M456.9 87.4 H476.5" stroke="#0a0a0a" stroke-width="1.5"/><rect x="467.8" y="79.4" width="4" height="1.1" fill="#1840c0"/><path d="M479.8 94.9 V100.5 H474.2 Z" fill="#6e6e6e"/><path d="M484 92.8 H505" stroke="#b8b8bc" stroke-width="0.8"/><path d="M485.2 90.4 Q484.8 87.2 487.4 86.8 L492 86.4 L493.6 83.6 Q494 83 495 83 H500 Q501.2 83 501.6 84 L502.4 86.4 Q503.8 86.8 503.8 88.4 V90.4 Z" fill="#e81010" stroke="#a00000" stroke-width="0.5"/><path d="M494.6 84.2 H500.2 L500.8 86.4 H493.6 Z" fill="#fff"/><circle cx="489.4" cy="90.8" r="2" fill="#111"/><circle cx="499.8" cy="90.8" r="2" fill="#111"/><circle cx="489.4" cy="90.8" r="0.8" fill="#aaa"/><circle cx="499.8" cy="90.8" r="0.8" fill="#aaa"/><path d="M507.8 94.9 V100.5 H502.2 Z" fill="#6e6e6e"/><path d="M512.6 92.4 L521 83.4 L534 87.4 L528.4 97.8 Z M516.8 87.9 L531.2 92.6 M514.7 90.1 L529.8 95.2 M518.9 85.6 L532.6 90 M525.3 84.7 L518 94.2 M529.6 86 L523.2 96" fill="none" stroke="#a4a4a8" stroke-width="0.7"/><path d="M523.4 88.6 L526.9 84.3" stroke="#10a020" stroke-width="1.3"/><path d="M524.6 91 L530.6 92.6" stroke="#e02020" stroke-width="1.3"/><rect x="521.4" y="88.6" width="3.4" height="3.4" fill="#fff" stroke="#000" stroke-width="1.2"/><path d="M535.8 94.9 V100.5 H530.2 Z" fill="#6e6e6e"/><circle cx="550.7" cy="88" r="8.8" fill="none" stroke="#444" stroke-width="1"/><path d="M552 88.3 H561.2" stroke="#000" stroke-width="1.2"/><circle cx="550.8" cy="88.3" r="1.5" fill="#fff" stroke="#000" stroke-width="0.9"/><path d="M563.8 94.9 V100.5 H558.2 Z" fill="#6e6e6e"/><circle cx="575.3" cy="84.4" r="3" fill="#ffe400" stroke="#c87800" stroke-width="0.9"/><rect x="580.5" y="83.6" width="5.6" height="5.6" fill="#ffe400" stroke="#c87800" stroke-width="0.9"/><path d="M574.6 95.4 H580.4 L577.5 90.4 Z" fill="none" stroke="#c4682a" stroke-width="0.9"/><path d="M586 77.6 H589.8 V81.6 M568 94.6 V98.4 H572" fill="none" stroke="#000" stroke-width="1.2"/><path d="M591.8 94.9 V100.5 H586.2 Z" fill="#6e6e6e"/><path d="M604 93.2 Q603.6 90.4 601.6 88.4 Q599.8 86.2 600 84.4 Q600.6 78.4 606.8 78.4 Q613.2 78.4 613.6 84.4 Q613.8 86.4 612 88.4 Q610 90.4 609.8 93.2 Z" fill="url(#bulb)" stroke="#5c5c5c" stroke-width="0.9"/><path d="M604 93.4 H609.8 V95.6 Q609.8 97.4 606.9 97.4 Q604 97.4 604 95.6 Z" fill="#6e6e6e" stroke="#444" stroke-width="0.6"/><ellipse cx="606.9" cy="96.2" rx="1.6" ry="0.9" fill="#eee"/><path d="M619.8 94.9 V100.5 H614.2 Z" fill="#6e6e6e"/><path d="M631.5 86 V83.4 A3.3 3.3 0 0 1 638.1 83.4 V86" fill="none" stroke="#111" stroke-width="1.9"/><rect x="629.3" y="85.8" width="11" height="9.3" rx="1" fill="#d8d8d8" stroke="#111" stroke-width="1.2"/><path d="M631.4 88.6 H638.4 M631.4 90.6 H638.4 M631.4 92.6 H638.4" stroke="#9a9a9a" stroke-width="0.9"/><path d="M647.8 94.9 V100.5 H642.2 Z" fill="#6e6e6e"/><path d="M654.1 79.3 L671.5 83.3 L661.3 88.1 Z" fill="#ff5a10"/><path d="M661.3 88.1 L671.5 83.3 L671.5 86.7 L661.3 91.5 Z" fill="#f02a0a"/><path d="M661.3 91.5 L671.5 86.7 L671.5 89.5 L661.3 94.3 Z" fill="#d6d6d0"/><path d="M661.3 94.3 L671.5 89.5 L671.5 92.7 L661.3 97.5 Z" fill="#1a34a8"/><path d="M654.1 79.3 L661.3 88.1 L661.3 91.3 L654.1 82.5 Z" fill="#ff7c34"/><path d="M654.1 82.5 L661.3 91.3 L661.3 94.3 L654.1 85.5 Z" fill="#ffffff"/><path d="M654.1 85.5 L661.3 94.3 L661.3 97.5 L654.1 88.7 Z" fill="#8494ec"/><path d="M654.1 79.3 L671.5 83.3 V92.4 L661.3 97.5 L654.1 88.7 Z" fill="none" stroke="#0a0a0a" stroke-width="1.2" stroke-linejoin="round"/><path d="M675.8 94.9 V100.5 H670.2 Z" fill="#6e6e6e"/><path d="M689.15 80.23 A7.1 7.1 0 0 1 690.62 80.10" fill="none" stroke="#ff1500" stroke-width="3.7"/><path d="M690.38 80.10 A7.1 7.1 0 0 1 691.85 80.23" fill="none" stroke="#ff3f00" stroke-width="3.7"/><path d="M691.61 80.19 A7.1 7.1 0 0 1 693.04 80.57" fill="none" stroke="#ff6a00" stroke-width="3.7"/><path d="M692.81 80.49 A7.1 7.1 0 0 1 694.16 81.11" fill="none" stroke="#ff9400" stroke-width="3.7"/><path d="M693.94 80.99 A7.1 7.1 0 0 1 695.16 81.84" fill="none" stroke="#ffbf00" stroke-width="3.7"/><path d="M694.97 81.68 A7.1 7.1 0 0 1 696.02 82.73" fill="none" stroke="#ffe900" stroke-width="3.7"/><path d="M695.86 82.54 A7.1 7.1 0 0 1 696.71 83.76" fill="none" stroke="#e9ff00" stroke-width="3.7"/><path d="M696.59 83.54 A7.1 7.1 0 0 1 697.21 84.89" fill="none" stroke="#bfff00" stroke-width="3.7"/><path d="M697.13 84.66 A7.1 7.1 0 0 1 697.51 86.09" fill="none" stroke="#94ff00" stroke-width="3.7"/><path d="M697.47 85.85 A7.1 7.1 0 0 1 697.60 87.32" fill="none" stroke="#6aff00" stroke-width="3.7"/><path d="M697.60 87.08 A7.1 7.1 0 0 1 697.47 88.55" fill="none" stroke="#3fff00" stroke-width="3.7"/><path d="M697.51 88.31 A7.1 7.1 0 0 1 697.13 89.74" fill="none" stroke="#15ff00" stroke-width="3.7"/><path d="M697.21 89.51 A7.1 7.1 0 0 1 696.59 90.86" fill="none" stroke="#00ff15" stroke-width="3.7"/><path d="M696.71 90.64 A7.1 7.1 0 0 1 695.86 91.86" fill="none" stroke="#00ff3f" stroke-width="3.7"/><path d="M696.02 91.67 A7.1 7.1 0 0 1 694.97 92.72" fill="none" stroke="#00ff6a" stroke-width="3.7"/><path d="M695.16 92.56 A7.1 7.1 0 0 1 693.94 93.41" fill="none" stroke="#00ff94" stroke-width="3.7"/><path d="M694.16 93.29 A7.1 7.1 0 0 1 692.81 93.91" fill="none" stroke="#00ffbf" stroke-width="3.7"/><path d="M693.04 93.83 A7.1 7.1 0 0 1 691.61 94.21" fill="none" stroke="#00ffe9" stroke-width="3.7"/><path d="M691.85 94.17 A7.1 7.1 0 0 1 690.38 94.30" fill="none" stroke="#00e9ff" stroke-width="3.7"/><path d="M690.62 94.30 A7.1 7.1 0 0 1 689.15 94.17" fill="none" stroke="#00bfff" stroke-width="3.7"/><path d="M689.39 94.21 A7.1 7.1 0 0 1 687.96 93.83" fill="none" stroke="#0094ff" stroke-width="3.7"/><path d="M688.19 93.91 A7.1 7.1 0 0 1 686.84 93.29" fill="none" stroke="#006aff" stroke-width="3.7"/><path d="M687.06 93.41 A7.1 7.1 0 0 1 685.84 92.56" fill="none" stroke="#003fff" stroke-width="3.7"/><path d="M686.03 92.72 A7.1 7.1 0 0 1 684.98 91.67" fill="none" stroke="#0015ff" stroke-width="3.7"/><path d="M685.14 91.86 A7.1 7.1 0 0 1 684.29 90.64" fill="none" stroke="#1500ff" stroke-width="3.7"/><path d="M684.41 90.86 A7.1 7.1 0 0 1 683.79 89.51" fill="none" stroke="#3f00ff" stroke-width="3.7"/><path d="M683.87 89.74 A7.1 7.1 0 0 1 683.49 88.31" fill="none" stroke="#6a00ff" stroke-width="3.7"/><path d="M683.53 88.55 A7.1 7.1 0 0 1 683.40 87.08" fill="none" stroke="#9400ff" stroke-width="3.7"/><path d="M683.40 87.32 A7.1 7.1 0 0 1 683.53 85.85" fill="none" stroke="#bf00ff" stroke-width="3.7"/><path d="M683.49 86.09 A7.1 7.1 0 0 1 683.87 84.66" fill="none" stroke="#e900ff" stroke-width="3.7"/><path d="M683.79 84.89 A7.1 7.1 0 0 1 684.41 83.54" fill="none" stroke="#ff00e9" stroke-width="3.7"/><path d="M684.29 83.76 A7.1 7.1 0 0 1 685.14 82.54" fill="none" stroke="#ff00bf" stroke-width="3.7"/><path d="M684.98 82.73 A7.1 7.1 0 0 1 686.03 81.68" fill="none" stroke="#ff0094" stroke-width="3.7"/><path d="M685.84 81.84 A7.1 7.1 0 0 1 687.06 80.99" fill="none" stroke="#ff006a" stroke-width="3.7"/><path d="M686.84 81.11 A7.1 7.1 0 0 1 688.19 80.49" fill="none" stroke="#ff003f" stroke-width="3.7"/><path d="M687.96 80.57 A7.1 7.1 0 0 1 689.39 80.19" fill="none" stroke="#ff0015" stroke-width="3.7"/><circle cx="690.5" cy="87.2" r="9.1" fill="none" stroke="#1a1a1a" stroke-width="0.9"/><circle cx="690.5" cy="87.2" r="5.1" fill="#fff" stroke="#1a1a1a" stroke-width="0.7"/><path d="M703.8 94.9 V100.5 H698.2 Z" fill="#6e6e6e"/><circle cx="719" cy="87.8" r="8.7" fill="url(#sph)" stroke="#2a2a2a" stroke-width="0.6"/><path d="M710.4 88.6 Q719 92.6 727.6 88.6 M718.4 79.2 Q716 88 718.4 96.4" fill="none" stroke="#2e2e2e" stroke-width="1.1"/><rect x="735.5" y="76.5" width="23.6" height="22.4" fill="url(#dots)"/><circle cx="747" cy="87.8" r="8.7" fill="url(#sph)" stroke="#2a2a2a" stroke-width="0.6"/><path d="M738.4 88.6 Q747 92.6 755.6 88.6 M746.4 79.2 Q744 88 746.4 96.4" fill="none" stroke="#2e2e2e" stroke-width="1.1"/><path d="M759.8 94.9 V100.5 H754.2 Z" fill="#6e6e6e"/><ellipse cx="775.4" cy="96" rx="8" ry="2" fill="#000" opacity="0.18"/><circle cx="774.8" cy="87.8" r="8.8" fill="url(#bsph)"/><ellipse cx="771.6" cy="83.2" rx="2.6" ry="1.8" fill="#fff" opacity="0.85" transform="rotate(-30 771.6 83.2)"/><path d="M779 94.2 Q782.4 91.6 782.8 88" stroke="#6a90ff" stroke-width="1.1" fill="none" opacity="0.8"/><path d="M787.8 94.9 V100.5 H782.2 Z" fill="#6e6e6e"/><ellipse cx="799" cy="92" rx="10" ry="8" fill="url(#glow)"/><path d="M801 80.4 L813.8 77 L812 89.6 Q804.6 88 801 80.4 Z" fill="url(#cone)" stroke="#b85c00" stroke-width="0.6"/><path d="M801 80.4 Q807.4 83 812 89.6 Q804.6 88.6 801 80.4 Z" fill="#fff4d8" stroke="#b85c00" stroke-width="0.5"/><path d="M815.8 94.9 V100.5 H810.2 Z" fill="#6e6e6e"/><path d="M828.9 82.0 L829.1 79.5 L832.7 79.5 L832.9 82.0 L834.6 82.6 L837.0 81.0 L839.5 83.0 L837.5 84.9 L838.2 86.3 L841.2 86.5 L841.2 89.5 L838.2 89.7 L837.5 91.1 L839.5 93.0 L837.0 95.0 L834.6 93.4 L832.9 94.0 L832.7 96.5 L829.1 96.5 L828.9 94.0 L827.2 93.4 L824.8 95.0 L822.3 93.0 L824.3 91.1 L823.6 89.7 L820.6 89.5 L820.6 86.5 L823.6 86.3 L824.3 84.9 L822.3 83.0 L824.8 81.0 L827.2 82.6 Z" fill="#f6e9a0" stroke="#c8841c" stroke-width="1.1"/><path d="M828.4 83.2 Q828.4 81.6 831 81.6 Q833.6 81.6 833.6 83.2 V90.6 Q833.6 92 831 92 Q828.4 92 828.4 90.6 Z" fill="#a8a8a8" stroke="#2a2a2a" stroke-width="0.9"/><ellipse cx="831" cy="83.2" rx="2.4" ry="1.1" fill="#e4e4e4"/><path d="M843.8 94.9 V100.5 H838.2 Z" fill="#6e6e6e"/><path d="M849 78.3 H857 M849 89.3 H857.6 M850.4 80 V87.6 M858.8 91 V98.2 M869 91 V98.2 M860.6 96 H867.2" stroke="#000" stroke-width="1.1" fill="none"/><path d="M850.4 79.2 L852 81.8 H848.8 Z M850.4 88.4 L852 85.8 H848.8 Z M859.8 96 L862.2 94.5 V97.5 Z M868 96 L865.6 94.5 V97.5 Z" fill="#000"/><rect x="857" y="77" width="2.6" height="2.6" fill="#fff" stroke="#000" stroke-width="0.9"/><rect x="857.5" y="88" width="2.6" height="2.6" fill="#fff" stroke="#000" stroke-width="0.9"/><rect x="867.7" y="88" width="2.6" height="2.6" fill="#fff" stroke="#000" stroke-width="0.9"/><path d="M871.8 94.9 V100.5 H866.2 Z" fill="#6e6e6e"/><circle cx="887" cy="87.4" r="11" fill="url(#gh)" stroke="#7c7c7c" stroke-width="1.6"/><path d="M885 77 L886.6 88 M884 88 Q892 80 897 79.5 M889 93 Q894 94 896 90.5" stroke="#d8f0cc" stroke-width="0.9" fill="none"/><path d="M879.4 92.6 Q880.4 88.6 884 88.2 L885.6 86 L887.4 86.6 L887.2 88.6 Q890 89.4 889.6 91.6 Q889.2 93.6 886.6 93.8 L886 96.6 Q884 98 881.8 96.8 Q880 95.4 879.4 92.6 Z" fill="#3a3a3a"/><path d="M886.6 93.8 Q890 97.4 894 95.2" stroke="#3a3a3a" stroke-width="1.2" fill="none"/><path d="M899.8 94.9 V100.5 H894.2 Z" fill="#6e6e6e"/><circle cx="915" cy="87.5" r="9.8" fill="url(#hlp)"/><text x="915" y="94.2" text-anchor="middle" font-family="Liberation Serif, serif" font-weight="700" font-size="18.5" fill="#fff">?</text><path d="M927.8 94.9 V100.5 H922.2 Z" fill="#6e6e6e"/></svg>
<svg width="1124" height="754" viewBox="0 0 1124 754"><defs>
<radialGradient id="bs2" cx="0.38" cy="0.3" r="0.8"><stop offset="0" stop-color="#b4c2ff"/><stop offset="0.5" stop-color="#5a74e8"/><stop offset="1" stop-color="#1e2e9c"/></radialGradient>
<linearGradient id="bl1" x1="0" y1="0" x2="1" y2="1"><stop offset="0" stop-color="#a0b0ff"/><stop offset="1" stop-color="#3850d0"/></linearGradient>
<linearGradient id="or1" x1="0" y1="0" x2="0" y2="1"><stop offset="0" stop-color="#ff8400"/><stop offset="1" stop-color="#ffc400"/></linearGradient>
<linearGradient id="gr1" x1="0" y1="0" x2="1" y2="0"><stop offset="0" stop-color="#e0e0e0"/><stop offset="1" stop-color="#707070"/></linearGradient>
</defs><path d="M52.0 150.0 V156.0 H46.0 Z" fill="#6e6e6e"/><path d="M24.0 178.0 V184.0 H18.0 Z" fill="#6e6e6e"/><path d="M52.0 178.0 V184.0 H46.0 Z" fill="#6e6e6e"/><path d="M24.0 206.0 V212.0 H18.0 Z" fill="#6e6e6e"/><path d="M52.0 206.0 V212.0 H46.0 Z" fill="#6e6e6e"/><path d="M24.0 234.0 V240.0 H18.0 Z" fill="#6e6e6e"/><path d="M52.0 234.0 V240.0 H46.0 Z" fill="#6e6e6e"/><path d="M24.0 262.0 V268.0 H18.0 Z" fill="#6e6e6e"/><path d="M52.0 262.0 V268.0 H46.0 Z" fill="#6e6e6e"/><path d="M24.0 290.0 V296.0 H18.0 Z" fill="#6e6e6e"/><path d="M52.0 290.0 V296.0 H46.0 Z" fill="#6e6e6e"/><path d="M24.0 318.0 V324.0 H18.0 Z" fill="#6e6e6e"/><path d="M52.0 318.0 V324.0 H46.0 Z" fill="#6e6e6e"/><path d="M24.0 346.0 V352.0 H18.0 Z" fill="#6e6e6e"/><path d="M52.0 346.0 V352.0 H46.0 Z" fill="#6e6e6e"/><path d="M24.0 430.0 V436.0 H18.0 Z" fill="#6e6e6e"/><path d="M52.0 458.0 V464.0 H46.0 Z" fill="#6e6e6e"/><path d="M52.0 486.0 V492.0 H46.0 Z" fill="#6e6e6e"/><path d="M24.0 542.0 V548.0 H18.0 Z" fill="#6e6e6e"/><path d="M52.0 542.0 V548.0 H46.0 Z" fill="#6e6e6e"/><path d="M24.0 570.0 V576.0 H18.0 Z" fill="#6e6e6e"/><path d="M52.0 570.0 V576.0 H46.0 Z" fill="#6e6e6e"/><path d="M24.0 598.0 V604.0 H18.0 Z" fill="#6e6e6e"/><path d="M52.0 598.0 V604.0 H46.0 Z" fill="#6e6e6e"/><path d="M24.0 626.0 V632.0 H18.0 Z" fill="#6e6e6e"/><path d="M52.0 626.0 V632.0 H46.0 Z" fill="#6e6e6e"/><path d="M6.5 135.2 V146.8 L9.2 144.5 L11.2 149.2 L13 148.4 L11.1 143.8 L14.8 143.5 Z" fill="#fff" stroke="#000" stroke-width="1"/><circle cx="38.5" cy="142.6" r="1.9" fill="#fff" stroke="#333" stroke-width="0.9"/><path d="M3.5 178.5 L8.6 165.2 L18.5 175.5" fill="none" stroke="#333" stroke-width="0.9"/><circle cx="3.5" cy="178.5" r="1.5" fill="#fff" stroke="#111" stroke-width="0.9"/><circle cx="8.6" cy="165.2" r="1.5" fill="#fff" stroke="#111" stroke-width="0.9"/><circle cx="18.5" cy="175.5" r="1.5" fill="#fff" stroke="#111" stroke-width="0.9"/><path d="M31 165 C42 160.5 47.5 166 46.2 171.6 C45 177 38 178 31 176.6" fill="none" stroke="#333" stroke-width="0.9"/><rect x="29.4" y="163.4" width="3.2" height="3.2" fill="#fff" stroke="#000" stroke-width="1.0"/><rect x="43.4" y="160.4" width="3.2" height="3.2" fill="#fff" stroke="#000" stroke-width="1.0"/><rect x="29.4" y="175.0" width="3.2" height="3.2" fill="#fff" stroke="#000" stroke-width="1.0"/><rect x="45.4" y="177.4" width="3.2" height="3.2" fill="#fff" stroke="#000" stroke-width="1.0"/><circle cx="11" cy="198.5" r="9.5" fill="none" stroke="#555" stroke-width="0.9"/><path d="M11.3 198.5 L17.5 192.5" stroke="#222" stroke-width="1.3"/><circle cx="11.3" cy="198.5" r="1.3" fill="#fff" stroke="#111" stroke-width="0.9"/><circle cx="17.5" cy="192.5" r="1.3" fill="#fff" stroke="#111" stroke-width="0.9"/><ellipse cx="39" cy="198.8" rx="10" ry="6.8" fill="none" stroke="#555" stroke-width="0.9"/><path d="M39 192.3 V198.8 H48.5" fill="none" stroke="#555" stroke-width="0.8"/><rect x="37.4" y="190.7" width="3.2" height="3.2" fill="#fff" stroke="#000" stroke-width="1.0"/><rect x="37.4" y="197.2" width="3.2" height="3.2" fill="#fff" stroke="#000" stroke-width="1.0"/><rect x="46.7" y="197.2" width="3.2" height="3.2" fill="#fff" stroke="#000" stroke-width="1.0"/><path d="M4.5 218.5 Q15.5 219.5 19.5 227.5 L4.5 235.5 Z" fill="none" stroke="#333" stroke-width="0.9"/><circle cx="4.5" cy="218.5" r="1.3" fill="#fff" stroke="#111" stroke-width="0.9"/><circle cx="19.5" cy="227.5" r="1.3" fill="#fff" stroke="#111" stroke-width="0.9"/><circle cx="4.5" cy="235.5" r="1.3" fill="#fff" stroke="#111" stroke-width="0.9"/><rect x="30.5" y="222" width="17" height="10.5" fill="none" stroke="#222" stroke-width="1.1"/><circle cx="47.5" cy="222" r="1.3" fill="#fff" stroke="#111" stroke-width="0.9"/><circle cx="30.5" cy="232.5" r="1.3" fill="#fff" stroke="#111" stroke-width="0.9"/><path d="M2.5 254.5 L6.8 247.2 H15.3 L19.6 254.5 L15.3 261.8 H6.8 Z" fill="none" stroke="#444" stroke-width="0.9"/><path d="M10.5 254.5 H18.6" stroke="#222" stroke-width="1"/><circle cx="10.5" cy="254.5" r="1.2" fill="#fff" stroke="#111" stroke-width="0.9"/><circle cx="18.8" cy="254.5" r="1.2" fill="#fff" stroke="#111" stroke-width="0.9"/><path d="M38 248 H47 V257" fill="none" stroke="#aaa" stroke-width="0.8"/><path d="M31 248 H37 Q47 248 47 258 V263" fill="none" stroke="#111" stroke-width="1.9"/><rect x="29.4" y="246.4" width="3.2" height="3.2" fill="#fff" stroke="#000" stroke-width="1.0"/><rect x="45.4" y="261.4" width="3.2" height="3.2" fill="#fff" stroke="#000" stroke-width="1.0"/><path d="M7 275.5 L19 275.8 L14 291 L3 286 Z" fill="#7a90f0" stroke="#222" stroke-width="0.9"/><path d="M13 275.6 L8.5 288.5 M5 280.8 L16.5 283.4" stroke="#2a3a90" stroke-width="0.8" fill="none"/><rect x="5.4" y="273.9" width="3.2" height="3.2" fill="#fff" stroke="#000" stroke-width="1.0"/><rect x="17.4" y="274.2" width="3.2" height="3.2" fill="#fff" stroke="#000" stroke-width="1.0"/><rect x="12.4" y="289.4" width="3.2" height="3.2" fill="#fff" stroke="#000" stroke-width="1.0"/><rect x="1.4" y="284.4" width="3.2" height="3.2" fill="#fff" stroke="#000" stroke-width="1.0"/><path d="M31 278.6 L39 273.8 L44 275.6 L36 280.6 Z" fill="#fff" stroke="#222" stroke-width="0.8"/><path d="M36 280.6 L44 275.6 Q48 279 47.6 285.2 L40.4 289 Q41 283.6 36 280.6 Z" fill="url(#bl1)" stroke="#222" stroke-width="0.8"/><path d="M40.4 289 L47.6 285.2 L47.4 288.6 L40.6 292.4 Z" fill="#fff" stroke="#222" stroke-width="0.8"/><path d="M2.5 306.5 L10.5 302.6 L19 306 L11 310 Z" fill="#8ea2ff"/><path d="M2.5 306.5 L11 310 V320.2 L2.5 316.2 Z" fill="#5a74ea"/><path d="M11 310 L19 306 V316 L11 320.2 Z" fill="#3048b8"/><path d="M2.5 306.5 L10.5 302.6 L19 306 V316 L11 320.2 L2.5 316.2 Z" fill="none" stroke="#1e2a70" stroke-width="0.7"/><circle cx="43" cy="307.2" r="7" fill="url(#bs2)" stroke="#1e2460" stroke-width="0.8"/><path d="M36.4 305.5 Q43 310.5 49.8 306 M42 300.4 Q39.8 307 43.6 314" stroke="#1e2460" stroke-width="0.8" fill="none"/><circle cx="35.4" cy="314.6" r="7.4" fill="url(#bs2)" stroke="#1e2460" stroke-width="0.8"/><path d="M28.2 313.2 Q35.4 318.6 42.6 313.8 M34.4 307.4 Q32.2 314.6 36.4 321.8" stroke="#1e2460" stroke-width="0.8" fill="none"/><ellipse cx="10.5" cy="331" rx="6" ry="2.8" fill="none" stroke="#333" stroke-width="0.9"/><path d="M0.3 337 Q10.5 342.4 21 337 V346 Q10.5 351.6 0.3 346 Z" fill="#4a64de" stroke="#1e2460" stroke-width="0.9"/><ellipse cx="10.5" cy="344.6" rx="5.4" ry="2.4" fill="#aebcff" stroke="#fff" stroke-width="1.5"/><path d="M36.5 329.5 Q43 333.5 49.4 333.6 Q45 341 42.6 349.6 Q35 346 28.8 345 Q33.5 338 36.5 329.5 Z" fill="#748af0" stroke="#222" stroke-width="0.9"/><path d="M43 332 Q38.5 340 35.5 347.2 M33.8 335.6 Q40.5 338.5 47 338.6 M31.2 340.4 Q38 342.6 44.6 343.8" stroke="#2a3a90" stroke-width="0.8" fill="none"/><path d="M2 361.6 Q1.4 359.4 3.8 359.8 L5.6 360.2 Q5 357.2 7.4 357.2 Q9.6 357.4 9 360 L11.4 359.2 Q12.8 359 12.8 360.6 L12.6 363 Q14.6 362.4 14.6 364.4 Q14.4 366.4 12.4 366 L12.6 368.6 L9.4 368.6 Q9.8 366.6 8 366.6 Q6.2 366.8 6.6 368.8 L3.4 368.2 L3.8 365.6 Q1.6 366 1.6 364 Q1.8 362.2 3.6 362.6 Z" fill="#ffaa00" stroke="#b86800" stroke-width="0.7"/><path d="M9.4 368.8 L12.6 368.4 Q12.2 366.2 14.4 366.4 Q16.4 366.6 15.8 368.8 L18.6 369 L18.4 372 Q20.8 371.6 20.8 373.6 Q20.6 375.4 18.6 375 L18.8 377.8 L15.8 377.4 Q16 375.4 14.2 375.4 Q12.6 375.6 12.8 377.6 L9.6 377.4 L9.8 374.8 Q7.6 375 7.8 373 Q8 371.4 9.8 371.8 Z" fill="#fff" stroke="#808080" stroke-width="0.7"/><path d="M27.2 378.8 L31.6 358.6 L35 369.4 L44.2 359 L40.6 371.4 L49 373.4 L39.6 375.6 L37.6 378.8 L34 376.4 Z" fill="url(#or1)" stroke="#d06800" stroke-width="0.4"/><path d="M10 385.4 H16.6 L11.6 397.4 Z" fill="#1a2a98"/><rect x="0.3" y="394" width="10.8" height="4.6" fill="#fff" stroke="#000" stroke-width="1"/><path d="M11.6 399 L15.4 395.6 L20 400.4 L16 404 Z" fill="#fff" stroke="#555" stroke-width="0.8"/><rect x="29.5" y="395" width="18" height="4.6" fill="#fff" stroke="#000" stroke-width="1.1"/><path d="M39 386 H46 L40 399.6 H39 Z" fill="#1a2a98"/><circle cx="11" cy="420.4" r="4.6" fill="#000"/><circle cx="7" cy="426.4" r="4.6" fill="#000"/><circle cx="15" cy="426.4" r="4.6" fill="#000"/><circle cx="11" cy="420.4" r="3.3" fill="#9c9cf4"/><circle cx="7.2" cy="426.4" r="3.1" fill="#fff"/><circle cx="14.8" cy="426.4" r="3.1" fill="#1c1c84"/><circle cx="39.5" cy="419.4" r="3.3" fill="#9c9cf4" stroke="#7c7cd0" stroke-width="0.6"/><circle cx="34" cy="427.4" r="3.3" fill="#fff" stroke="#8a8a8a" stroke-width="0.6"/><circle cx="44.5" cy="427" r="3.3" fill="#1c1c84"/><path d="M1.2 446.4 Q12.6 447 15.8 460.4" fill="none" stroke="#111" stroke-width="1.2"/><rect x="4.4" y="444.6" width="3.2" height="3.2" fill="#fff" stroke="#000" stroke-width="1.0"/><rect x="14.4" y="454.4" width="3.2" height="3.2" fill="#fff" stroke="#000" stroke-width="1.0"/><path d="M29 446.6 Q42.6 447 44.4 461.6" fill="none" stroke="#111" stroke-width="2"/><path d="M28.4 442.4 Q45.6 441.6 48.4 457" fill="none" stroke="#111" stroke-width="1" stroke-dasharray="1 1.5"/><rect x="34.4" y="440.4" width="3.2" height="3.2" fill="#fff" stroke="#000" stroke-width="1.0"/><rect x="46.4" y="452.4" width="3.2" height="3.2" fill="#fff" stroke="#000" stroke-width="1.0"/><text transform="translate(10.7 489.8) scale(0.8 1)" text-anchor="middle" font-family="Liberation Serif, serif" font-weight="700" font-size="32" fill="#6078ee" stroke="#2a3aa0" stroke-width="1.1">T</text><path d="M35.4 482.4 L42.4 475.4" stroke="#222" stroke-width="0.9"/><path d="M43.6 474.2 L42.8 477.6 L40.2 475 Z" fill="#222"/><rect x="30.6" y="482.0" width="4.8" height="4.8" fill="#fff" stroke="#222" stroke-width="0.9"/><rect x="43.0" y="469.8" width="4.8" height="4.8" fill="#6c8cf2" stroke="#2a3a90" stroke-width="0.9"/><rect x="2.8" y="497.8" width="4.4" height="4.4" fill="#5878ee" stroke="#2a3a90" stroke-width="0.8"/><rect x="15.0" y="500.2" width="5.2" height="5.2" fill="#5878ee" stroke="#2a3a90" stroke-width="0.8"/><rect x="9.8" y="502.8" width="5.6" height="5.6" fill="#6c8cf2" stroke="#2a3a90" stroke-width="0.8"/><rect x="2.9" y="509.7" width="4.6" height="4.6" fill="#fff" stroke="#333" stroke-width="0.8"/><rect x="15.0" y="511.6" width="5.2" height="5.2" fill="#5878ee" stroke="#2a3a90" stroke-width="0.8"/><rect x="28.6" y="499" width="4.6" height="12.6" fill="#fff" stroke="#111" stroke-width="1"/><path d="M34 502.6 Q39 501.4 42 504" fill="none" stroke="#222" stroke-width="0.8"/><path d="M43 505 L39.8 504.6 L41.8 502.2 Z" fill="#222"/><path d="M36.4 513.4 L46.2 504 L49.2 507.4 L39.4 516.8 Z" fill="#5878ee" stroke="#2a3a90" stroke-width="0.8"/><path d="M1.6 530.6 Q1.6 529 3.2 528.2 L10 525 Q11.4 524.4 12.8 525 L19 527.8 Q20.4 528.6 20.4 530.2 V538 L12.6 544.8 Q11 545.4 9.6 544.6 L3 541 Q1.6 540.2 1.6 538.6 Z" fill="#4a64de" stroke="#1e2a70" stroke-width="0.7"/><path d="M2 529.8 L11 525 L20 529 L11.4 533.6 Z" fill="#8ea2ff"/><path d="M10.8 537.6 L15.4 535.4 L20.2 537.6 V542 L15.4 545 L10.8 542.6 Z" fill="#f4f4f4" stroke="#444" stroke-width="0.7"/><path d="M10.8 537.6 L15.4 540 L20.2 537.6 M15.4 540 V545" stroke="#444" stroke-width="0.6" fill="none"/><path d="M28.8 543 L34 537.6 H50.4 L45.2 543 Z" fill="#4a68e0" stroke="#1e2a80" stroke-width="0.7"/><path d="M35.4 538.6 V530" stroke="#fff" stroke-width="1.6"/><path d="M33.0 531 L35.4 526.4 L37.8 531 Z" fill="#fff"/><path d="M40 538.6 V530" stroke="#fff" stroke-width="1.6"/><path d="M37.6 531 L40 526.4 L42.4 531 Z" fill="#fff"/><path d="M44.6 538.6 V530" stroke="#fff" stroke-width="1.6"/><path d="M42.2 531 L44.6 526.4 L47.0 531 Z" fill="#fff"/><rect x="1.8" y="552.8" width="3.6" height="3.6" fill="#fff" stroke="#2a3a90" stroke-width="1.1"/><rect x="8.8" y="552.8" width="3.6" height="3.6" fill="#fff" stroke="#2a3a90" stroke-width="1.1"/><rect x="15.6" y="552.8" width="3.6" height="3.6" fill="#fff" stroke="#2a3a90" stroke-width="1.1"/><rect x="1.8" y="559.6" width="3.6" height="3.6" fill="#fff" stroke="#2a3a90" stroke-width="1.1"/><rect x="8.8" y="559.6" width="3.6" height="3.6" fill="#fff" stroke="#2a3a90" stroke-width="1.1"/><rect x="15.6" y="559.6" width="3.6" height="3.6" fill="#fff" stroke="#2a3a90" stroke-width="1.1"/><rect x="1.8" y="566.6" width="3.6" height="3.6" fill="#fff" stroke="#111" stroke-width="1.1"/><rect x="8.8" y="566.6" width="3.6" height="3.6" fill="#fff" stroke="#111" stroke-width="1.1"/><rect x="15.6" y="566.6" width="3.6" height="3.6" fill="#fff" stroke="#111" stroke-width="1.1"/><rect x="35.4" y="553.8" width="7.2" height="5" fill="#fff" stroke="#111" stroke-width="1"/><rect x="36.2" y="560.6" width="5.6" height="4.4" fill="#fff" stroke="#111" stroke-width="1"/><rect x="35.4" y="566.8" width="7.2" height="5.4" fill="#fff" stroke="#111" stroke-width="1"/><path d="M39 551.6 V573.4" stroke="#e01818" stroke-width="1.2"/><path d="M1.6 584 L8 581.4 V596.6 L1.6 598.6 Z" fill="#f0f0f0" stroke="#333" stroke-width="0.8"/><path d="M8 581.4 L10.6 582.4 V597.6 L8 596.6" fill="#c8c8c8" stroke="#333" stroke-width="0.7"/><path d="M8.6 598 L13.2 583.4 L19.4 585 L14.6 600.8 Z" fill="#4a64de" stroke="#1e2a70" stroke-width="0.8"/><path d="M13.2 583.4 L15.6 582.2 L21 584 L19.4 585 Z" fill="#8ea2ff" stroke="#1e2a70" stroke-width="0.6"/><path d="M30.4 591.4 L35.4 597.6 L48.4 581.6" fill="none" stroke="#000" stroke-width="2.7" stroke-linejoin="miter"/><path d="M1.4 613.6 L8.4 610.6 L14 613 V620.6 L7 624 L1.4 621.4 Z" fill="#c4c4c4" stroke="#444" stroke-width="0.7"/><path d="M1.4 613.6 L7 616.2 L14 613 M7 616.2 V624" stroke="#444" stroke-width="0.6" fill="none"/><path d="M7 616.2 L14 613 V620.6 L7 624 Z" fill="#8a8a8a"/><path d="M14.6 612.6 L20.6 625.4 Q17 628.4 11.4 626 Z" fill="url(#gr1)" stroke="#444" stroke-width="0.7"/><path d="M39.6 613.6 L47.6 623.4 L40 629.6 L31 624.2 Z" fill="#ffc04a" stroke="#a86400" stroke-width="0.7"/><path d="M39.6 613.6 L40 629.6 L47.6 623.4 Z" fill="#e09408"/><path d="M37.6 611.4 L42.4 607.2 L49 608 V612 L43 614.4 Z" fill="#f4f4f4" stroke="#333" stroke-width="0.7"/><path d="M39 611.3 L43 608.3 M40.5 612.5 L44.5 609.3 M42 613.5 L46 610.3" stroke="#888" stroke-width="0.6"/><rect x="48.8" y="607" width="2.2" height="6" fill="#000"/></svg>
<div class="a" style="left:157px;top:160px;width:532px;height:546.6px;border:1px solid #56575b;background:#f0f0f0;box-shadow:0 4px 16px 1px rgba(0,0,0,.31),0 0 5px rgba(0,0,0,.22)"></div>
<div class="a" style="left:158px;top:161px;width:532px;height:37px;background:#fff"></div>
<svg width="1124" height="754" viewBox="0 0 1124 754"><g transform="translate(167,169)"><rect x="0" y="0" width="20" height="20.2" fill="#000"/><path d="M0 0 H7 L8.8 4.4 L10.9 9.2 L14 11.4 L20 10.6 V11.6 L14.4 18.6 L12.2 19.3 L9.4 17.4 L0 10.3 Z" fill="#fff"/><path d="M3.7 0.6 Q3.2 4.6 1.4 8" fill="none" stroke="#000" stroke-width="1.3"/><path d="M4.4 9.6 L8.8 7.4 M4.6 10.4 L5.6 13.4 L9.8 12.6" fill="none" stroke="#222" stroke-width="1.1"/><path d="M11.6 17.8 L13.6 17.2" stroke="#999" stroke-width="1"/><path d="M14.2 1.5 H18.8 L15.8 8" fill="none" stroke="#fff" stroke-width="1.4"/></g><path d="M663.5 173.5 L675 185 M675 173.5 L663.5 185" stroke="#111" stroke-width="1.2" fill="none"/></svg>
<span class="t" style="left:192.4px;top:169.28px;font-size:14.5px;color:#000;letter-spacing:0.325px;line-height:20px">Object Description</span>
<div class="a" style="left:172px;top:216px;width:499px;height:423px;background:#fff;border-top:2px solid #6d6d6d;border-left:2px solid #6d6d6d;border-right:2px solid #fff;border-bottom:2px solid #fff;box-shadow:inset -1px -1px 0 #e3e3e3"></div>
<div class="a" style="left:172px;top:216px;width:503px;height:1px;background:#a0a0a0"></div>
<div class="a" style="left:172px;top:216px;width:1px;height:427px;background:#a0a0a0"></div>
<div class="a" style="left:654px;top:218px;width:19px;height:423.6px;background:#f0f0f0"></div>
<div class="a" style="left:654px;top:239px;width:19px;height:168px;background:#cdcdcd"></div>
<svg width="1124" height="754" viewBox="0 0 1124 754"><path d="M659.1 231.4 L663.6 226.7 L668.1 231.4" stroke="#5a5a5a" stroke-width="2.1" fill="none"/><path d="M659.1 628.8 L663.6 633.5 L668.1 628.8" stroke="#5a5a5a" stroke-width="2.1" fill="none"/></svg>
<span class="t" style="left:175.0px;top:219.28px;font-size:14.5px;color:#000;letter-spacing:0.014px;line-height:20px">polysurface</span>
<span class="t" style="left:182.9px;top:259.28px;font-size:14.5px;color:#000;letter-spacing:0.023px;line-height:20px">ID: 691c924a-c290-444c-b554-8e1a63c70964 (715)</span>
<span class="t" style="left:182.9px;top:279.28px;font-size:14.5px;color:#000;letter-spacing:0.167px;line-height:20px">Object name: (not named)</span>
<span class="t" style="left:182.9px;top:299.28px;font-size:14.5px;color:#000;letter-spacing:-0.180px;line-height:20px">Layer name: Shell</span>
<span class="t" style="left:182.9px;top:319.28px;font-size:14.5px;color:#000;letter-spacing:0.114px;line-height:20px">Render Material:</span>
<span class="t" style="left:190.9px;top:339.28px;font-size:14.5px;color:#000;letter-spacing:0.182px;line-height:20px">source = from layer</span>
<span class="t" style="left:190.9px;top:359.28px;font-size:14.5px;color:#000;letter-spacing:0.201px;line-height:20px">index = -1</span>
<span class="t" style="left:182.9px;top:399.28px;font-size:14.5px;color:#000;letter-spacing:-0.023px;line-height:20px">Geometry:</span>
<span class="t" style="left:190.9px;top:419.28px;font-size:14.5px;color:#000;letter-spacing:0.166px;line-height:20px">Valid polysurface.</span>
<span class="t" style="left:190.9px;top:439.28px;font-size:14.5px;color:#000;letter-spacing:0.093px;line-height:20px">closed solid polysurface with 18 surfaces.</span>
<span class="t" style="left:182.9px;top:459.28px;font-size:14.5px;color:#000;letter-spacing:0.073px;line-height:20px">Edge Tally:</span>
<span class="t" style="left:195.0px;top:479.28px;font-size:14.5px;color:#000;letter-spacing:-0.096px;line-height:20px">18 seam edges</span>
<span class="t" style="left:198.9px;top:499.28px;font-size:14.5px;color:#000;letter-spacing:0.059px;line-height:20px">4 singular edges</span>
<span class="t" style="left:195.0px;top:519.28px;font-size:14.5px;color:#000;letter-spacing:0.306px;line-height:20px">28 manifold edges</span>
<span class="t" style="left:191.2px;top:539.28px;font-size:14.5px;color:#000;letter-spacing:0.286px;line-height:20px">= 50 total edges</span>
<span class="t" style="left:182.9px;top:559.28px;font-size:14.5px;color:#000;letter-spacing:-0.054px;line-height:20px">Edge Tolerances: 0.00 to 0.00</span>
<span class="t" style="left:191.1px;top:579.28px;font-size:14.5px;color:#000;letter-spacing:0.082px;line-height:20px">median = 0.00 average = 0.00</span>
<span class="t" style="left:182.9px;top:599.28px;font-size:14.5px;color:#000;letter-spacing:0.028px;line-height:20px">Vertex Tolerances: all smaller than 0.000001</span>
<span class="t" style="left:182.9px;top:619.28px;font-size:14.5px;color:#000;letter-spacing:-0.047px;line-height:20px">Render mesh: 18 meshes  3416 vertices  3342 polygons</span>
<div class="a" style="left:369px;top:657px;width:96px;height:31px;border:1px solid #adadad;background:#e1e1e1"></div>
<span class="t" style="left:390.1px;top:663.48px;font-size:14.5px;color:#000;letter-spacing:0.314px;line-height:20px">Copy <u>A</u>ll</span>
<div class="a" style="left:473px;top:657px;width:96px;height:31px;border:1px solid #adadad;background:#e1e1e1"></div>
<span class="t" style="left:492.0px;top:663.48px;font-size:14.5px;color:#000;letter-spacing:-0.611px;line-height:20px"><u>S</u>ave As...</span>
<div class="a" style="left:577px;top:657px;width:94px;height:29px;border:2px solid #0078d7;background:#e1e1e1"></div>
<span class="t" style="left:608.0px;top:663.48px;font-size:14.5px;color:#000;letter-spacing:-0.370px;line-height:20px"><u>C</u>lose</span>
<svg width="1124" height="754" viewBox="0 0 1124 754"><path d="M677 706 L689 694 M681 706 L689 698 M685 706 L689 702" stroke="#a8a8a8" stroke-width="1.3" fill="none"/></svg>
<svg width="1124" height="754" viewBox="0 0 1124 754"><defs><filter id="bl" x="-30%" y="-30%" width="160%" height="160%"><feGaussianBlur stdDeviation="2.2"/></filter></defs><line x1="209.3" y1="95.5" x2="141.6" y2="35.8" stroke="#4a86e8" stroke-width="9.7" stroke-linecap="round"/><path d="M121.4 17.9 L152.7 26.2 L133.5 48.0 Z" fill="#4a86e8"/><circle cx="232.2" cy="116.5" r="21.5" fill="#000" opacity="0.18" filter="url(#bl)"/><circle cx="232.2" cy="115" r="20" fill="#4a86e8"/><text x="232.2" y="124.3" font-family="Liberation Sans, sans-serif" font-size="26.5" fill="#fff" text-anchor="middle">2</text><line x1="844.3" y1="250.9" x2="906.6" y2="326.4" stroke="#4a86e8" stroke-width="9.7" stroke-linecap="round"/><path d="M923.8 347.2 L894.2 334.1 L916.5 315.6 Z" fill="#4a86e8"/><circle cx="820.8" cy="226.5" r="21.5" fill="#000" opacity="0.18" filter="url(#bl)"/><circle cx="820.8" cy="225" r="20" fill="#4a86e8"/><text x="820.8" y="234.3" font-family="Liberation Sans, sans-serif" font-size="26.5" fill="#fff" text-anchor="middle">1</text><line x1="425.2" y1="360.0" x2="374.5" y2="315.4" stroke="#4a86e8" stroke-width="9.7" stroke-linecap="round"/><path d="M353.9 297.2 L385.9 305.5 L366.2 327.9 Z" fill="#4a86e8"/></svg>
</body></html>
